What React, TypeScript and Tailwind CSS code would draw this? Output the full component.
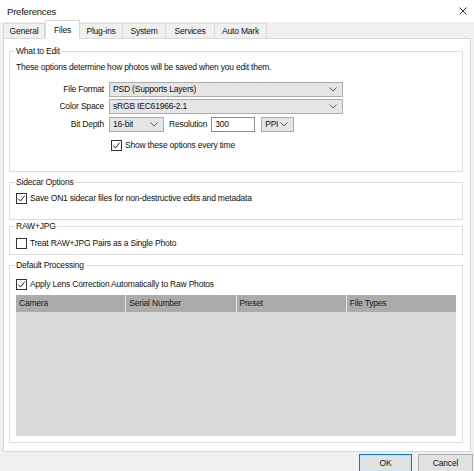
import React from "react";

const tabs = ["General", "Files", "Plug-ins", "System", "Services", "Auto Mark"];
const tabWidths: Record<string, string> = {
  General: "w-[42px]",
  Files: "w-[35px]",
  "Plug-ins": "w-[43px]",
  System: "w-[43px]",
  Services: "w-[49px]",
  "Auto Mark": "w-[52px]",
};

function Chevron() {
  return (
    <svg width="8" height="5" viewBox="0 0 8 5" className="shrink-0">
      <path d="M0.5 0.5 L4 4 L7.5 0.5" fill="none" stroke="#606060" strokeWidth="1" />
    </svg>
  );
}

function Select({ value, className }: { value: string; className: string }) {
  return (
    <div
      className={`h-[15px] bg-[#e5e5e5] border border-[#adadad] flex items-center justify-between pl-[3px] pr-[5px] ${className}`}
    >
      <span className="truncate">{value}</span>
      <Chevron />
    </div>
  );
}

function Checkbox({ checked }: { checked: boolean }) {
  return (
    <span className="w-[11px] h-[11px] border border-[#333333] bg-white flex items-center justify-center shrink-0">
      {checked && (
        <svg width="9" height="9" viewBox="0 0 9 9">
          <path d="M1.2 4.6 L3.5 7 L7.8 1.6" fill="none" stroke="#222222" strokeWidth="1" />
        </svg>
      )}
    </span>
  );
}

function CheckRow({ checked, label, className = "" }: { checked: boolean; label: string; className?: string }) {
  return (
    <div className={`flex items-center gap-[3px] h-[11px] ${className}`}>
      <Checkbox checked={checked} />
      <span>{label}</span>
    </div>
  );
}

export default function App() {
  return (
    <div className="w-[474px] h-[471px] overflow-hidden bg-[#f0f0f0] flex flex-col font-['Liberation_Sans',Arial,sans-serif] text-[8.5px] tracking-[-0.2px] leading-[11px] text-[#111111]">
      {/* Title bar */}
      <div className="h-[22px] bg-white flex items-center justify-between pl-[7px] pr-[7px] shrink-0">
        <span className="text-[9.5px]">Preferences</span>
        <svg width="8" height="8" viewBox="0 0 8 8">
          <path d="M0.5 0.5 L7.5 7.5 M7.5 0.5 L0.5 7.5" stroke="#222222" strokeWidth="0.9" />
        </svg>
      </div>

      {/* Tabs */}
      <div className="h-[16px] flex items-end pl-[3px] shrink-0">
        {tabs.map((t) =>
          t === "Files" ? (
            <div
              key={t}
              className={`relative z-10 h-[19px] -mb-[1px] bg-white border-x border-t border-[#d9d9d9] flex items-center justify-center ${tabWidths[t]}`}
            >
              {t}
            </div>
          ) : (
            <div
              key={t}
              className={`h-[15px] bg-[#f0f0f0] border-t border-r border-[#d9d9d9] first:border-l flex items-center justify-center ${tabWidths[t]}`}
            >
              {t}
            </div>
          )
        )}
      </div>

      {/* Panel */}
      <div className="mx-[3px] h-[414px] shrink-0 bg-white border border-[#d9d9d9] pl-[5px] pr-[7px] pt-[7px] flex flex-col">
        {/* What to Edit */}
        <fieldset className="border border-[#dcdcdc] px-[6px] pb-[20px]">
          <legend className="px-[1px] -ml-[1px]">What to Edit</legend>
          <p className="mt-[5px]">These options determine how photos will be saved when you edit them.</p>
          <div className="mt-[9px] flex flex-col">
            <div className="flex items-center">
              <span className="w-[88px] text-right">File Format</span>
              <Select value="PSD (Supports Layers)" className="ml-[5px] w-[234px]" />
            </div>
            <div className="flex items-center mt-[2px]">
              <span className="w-[88px] text-right">Color Space</span>
              <Select value="sRGB IEC61966-2.1" className="ml-[5px] w-[234px]" />
            </div>
            <div className="flex items-center mt-[3px]">
              <span className="w-[88px] text-right">Bit Depth</span>
              <Select value="16-bit" className="ml-[5px] w-[55px]" />
              <span className="ml-[5px]">Resolution</span>
              <div className="ml-[4px] w-[44px] h-[15px] bg-white border border-[#8c8c8c] flex items-center pl-[3px]">
                300
              </div>
              <Select value="PPI" className="ml-[6px] w-[33px]" />
            </div>
            <CheckRow checked label="Show these options every time" className="mt-[8px] ml-[95px]" />
          </div>
        </fieldset>

        {/* Sidecar Options */}
        <fieldset className="mt-[5px] border border-[#dcdcdc] px-[6px] pb-[15px]">
          <legend className="px-[1px] -ml-[1px]">Sidecar Options</legend>
          <CheckRow checked label="Save ON1 sidecar files for non-destructive edits and metadata" className="mt-[5px]" />
        </fieldset>

        {/* RAW+JPG */}
        <fieldset className="mt-[1px] border border-[#dcdcdc] px-[6px] pb-[5px]">
          <legend className="px-[1px] -ml-[1px]">RAW+JPG</legend>
          <CheckRow checked={false} label="Treat RAW+JPG Pairs as a Single Photo" className="mt-[6px]" />
        </fieldset>

        {/* Default Processing */}
        <fieldset className="mt-[5px] border border-[#dcdcdc] px-[6px] pb-[6px]">
          <legend className="px-[1px] -ml-[1px]">Default Processing</legend>
          <CheckRow checked label="Apply Lens Correction Automatically to Raw Photos" className="mt-[8px]" />
          <div className="mt-[5px] w-[440px]">
            <div className="flex h-[17px] bg-[#ababab]">
              {["Camera", "Serial Number", "Preset", "File Types"].map((c, i) => (
                <div
                  key={c}
                  className={`flex-1 flex items-center pl-[3px] text-[#1a1a1a] ${i > 0 ? "border-l border-[#e6e6e6]" : ""}`}
                >
                  {c}
                </div>
              ))}
            </div>
            <div className="h-[124px] bg-[#dadada]" />
          </div>
        </fieldset>
      </div>

      {/* Button bar */}
      <div className="flex-1 flex justify-end items-start pt-[2px] gap-[6px] pr-[1px]">
        <button className="w-[53px] h-[18px] bg-[#e1e1e1] border border-[#0078d7] outline outline-1 -outline-offset-2 outline-[#cfe3f5] flex items-center justify-center">
          OK
        </button>
        <button className="w-[55px] h-[18px] bg-[#e1e1e1] border border-[#adadad] flex items-center justify-center">
          Cancel
        </button>
      </div>
    </div>
  );
}
